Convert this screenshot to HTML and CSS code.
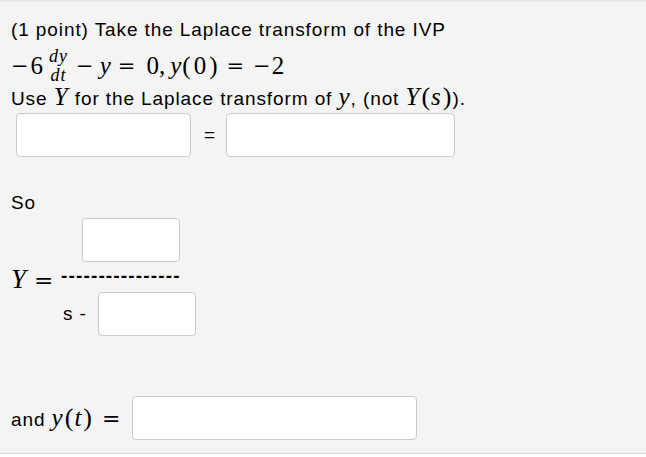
FILE: index.html
```html
<!DOCTYPE html>
<html>
<head>
<meta charset="utf-8">
<link rel="stylesheet" href="styles.css">
</head>
<body>
<div class="page">
  <div class="problem">
    <div class="line intro">(1 point) Take the Laplace transform of the IVP</div>
    <div class="eq">
      <span class="o o1">−</span><span class="n n6">6</span><span class="frac"><i class="fn">dy</i><i class="fd">dt</i></span><span class="o o2">−</span><i class="v v1">y</i><span class="o o3">=</span><span class="n">0</span><span class="n cm">,</span><i class="v">y</i><span class="n p1">(</span><span class="n">0</span><span class="n p2">)</span><span class="o o4">=</span><span class="o o5">−</span><span class="n">2</span>
    </div>
    <div class="line use">Use <i class="mi">Y</i> for the Laplace transform of <i class="mi">y</i>, (not <i class="mi">Y</i><span class="mp">(</span><i class="mi">s</i><span class="mp">)</span>).</div>
    <div class="row eqrow">
      <span class="box b1"></span>
      <span class="eqsign">=</span>
      <span class="box b2"></span>
    </div>
    <div class="line so">So</div>
    <div class="fracrow">
      <div class="lhs"><i class="bigY">Y</i><span class="o bigeq">=</span></div>
      <div class="fcol">
        <span class="box b3"></span>
        <div class="dashes">----------------</div>
        <div class="den"><span class="sm">s -</span><span class="box b4"></span></div>
      </div>
    </div>
    <div class="row androw">
      <span class="andtxt">and <i class="mi">y</i><span class="mp">(</span><i class="mi">t</i><span class="mp">)</span><span class="o andeq">=</span></span>
      <span class="box b5"></span>
    </div>
  </div>
</div>
</body>
</html>
```

FILE: styles.css
```css
html, body {
  margin: 0;
  padding: 0;
  background: #ffffff;
}
.page {
  height: 453px;
  background: #f4f4f4;
  border-bottom: 1px solid #dcdcdc;
  background-image: linear-gradient(#e6e6e6, #f4f4f4 3px);
}
.problem {
  padding: 19px 11px 0 11px;
  font-family: "Liberation Sans", Arial, sans-serif;
  font-size: 19px;
  letter-spacing: 0.9px;
  color: #000;
}
.line {
  line-height: 22px;
}
.intro {
  height: 22px;
}
.eq {
  display: flex;
  align-items: center;
  height: 40px;
  margin-top: 5px;
  font-family: "Liberation Serif", "Times New Roman", serif;
  font-size: 25px;
  letter-spacing: 0;
}
.o {
  font-family: "DejaVu Serif", serif;
  font-size: 21px;
  font-weight: 300;
}
.o1 { margin-left: 0; }
.n6 { margin-left: 2px; }
.frac {
  display: inline-flex;
  flex-direction: column;
  align-items: center;
  gap: 4px;
  font-size: 18px;
  line-height: 15px;
  letter-spacing: 1px;
  margin: 0 8px 0 6px;
}
.fn, .fd {
  display: block;
  height: 15px;
  line-height: 15px;
}
.o2 { margin-right: 6px; }
.v1 { margin-right: 7px; }
.o3 { margin-right: 11px; }
.cm { margin-right: 5px; }
.p1 { margin-left: 1px; margin-right: 3px; }
.p2 { margin-left: 3px; }
.o4 { margin-left: 9px; margin-right: 9px; }
.o5 { margin-right: 1px; }
.mi {
  font-family: "Liberation Serif", "Times New Roman", serif;
  font-size: 25px;
  letter-spacing: 1px;
}
.mp {
  font-family: "Liberation Serif", "Times New Roman", serif;
  font-size: 26px;
  letter-spacing: 0;
  margin: 0 1px;
}
.use {
  height: 26px;
}
.row {
  display: flex;
  align-items: center;
}
.box {
  display: block;
  background: #fff;
  border: 1px solid #cccccc;
  border-radius: 4px;
  box-sizing: border-box;
  height: 44px;
}
.eqrow {
  margin-top: 1px;
  margin-left: 5px;
}
.b1 { width: 175px; }
.eqsign {
  margin: 0 10px 0 13px;
}
.b2 { width: 229px; }
.so {
  margin-top: 35px;
}
.fracrow {
  display: flex;
  align-items: center;
  margin-top: 4px;
}
.lhs {
  width: 52px;
  display: flex;
  align-items: baseline;
  margin-top: 4px;
}
.bigY {
  font-family: "Liberation Serif", "Times New Roman", serif;
  font-size: 27px;
  letter-spacing: 0;
}
.bigeq {
  font-size: 23px;
  margin-left: 8px;
}
.fcol {
  display: flex;
  flex-direction: column;
  align-items: flex-start;
}
.b3 {
  width: 98px;
  margin-left: 19px;
}
.dashes {
  font-size: 19px;
  line-height: 16px;
  letter-spacing: 1.15px;
  margin-top: 6px;
  margin-left: -2px;
  font-weight: bold;
}
.den {
  display: flex;
  align-items: center;
  margin-top: 8px;
}
.sm {
  width: 35px;
}
.b4 { width: 98px; }
.androw {
  margin-top: 60px;
}
.andtxt {
  width: 121px;
}
.andeq {
  font-size: 22px;
  margin-left: 9px;
}
.b5 { width: 285px; }
```
